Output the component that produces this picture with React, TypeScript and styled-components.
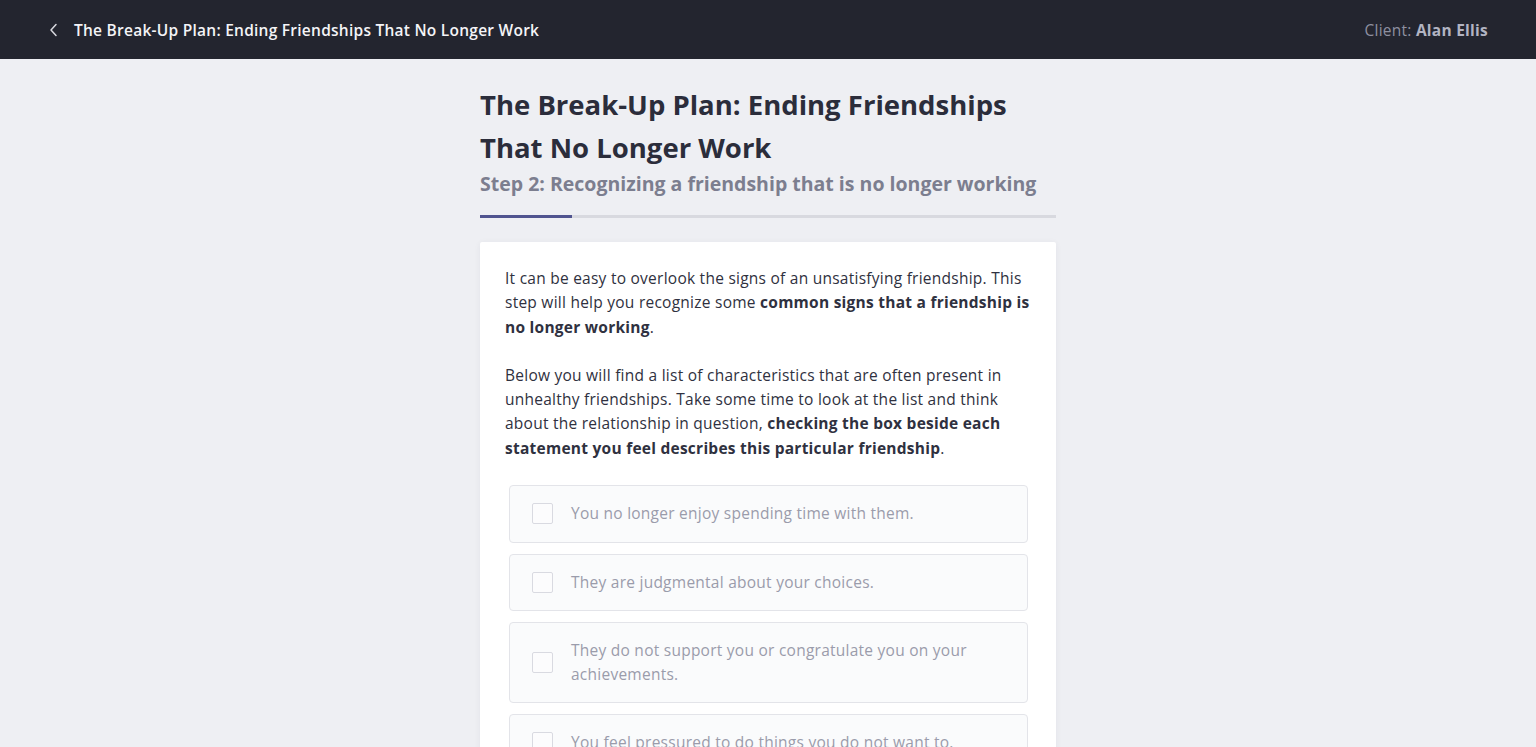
import React from "react";
import styled, { createGlobalStyle } from "styled-components";

const Global = createGlobalStyle`
  html, body { margin: 0; padding: 0; }
  body {
    background: #eeeff3;
    font-family: "Open Sans", "Lato", sans-serif;
    color: #2b2d3b;
    -webkit-font-smoothing: antialiased;
  }
  * { box-sizing: border-box; }
`;

const TopBar = styled.header`
  height: 59px;
  background: #23252f;
  display: flex;
  align-items: center;
  justify-content: space-between;
  padding: 0 48px 0 46px;
`;

const BarLeft = styled.div`
  display: flex;
  align-items: center;
  gap: 14px;
`;

const BackButton = styled.button`
  background: none;
  border: none;
  padding: 0;
  width: 14px;
  height: 20px;
  display: flex;
  align-items: center;
  justify-content: center;
  color: #d8d9df;
  cursor: pointer;
`;

const BarTitle = styled.h1`
  margin: 0;
  font-size: 15.5px;
  letter-spacing: 0.25px;
  font-weight: 600;
  color: #f4f4f7;
`;

const ClientLabel = styled.div`
  font-size: 15.5px;
  letter-spacing: 0.25px;
  color: #8e90a0;
  b { font-weight: 700; color: #b2b4c2; }
`;

const Main = styled.main`
  width: 576px;
  margin: 0 auto;
  padding-top: 24px;
`;

const Title = styled.h2`
  margin: 0;
  font-size: 27.5px;
  line-height: 43px;
  font-weight: 700;
  color: #2b2d3b;
`;

const Subtitle = styled.h3`
  margin: 0;
  font-size: 19.5px;
  line-height: 30px;
  font-weight: 700;
  color: #7c7e8f;
`;

const Progress = styled.div`
  margin-top: 16px;
  height: 3px;
  background: #d8d9df;
  overflow: hidden;
`;

const ProgressFill = styled.div`
  height: 100%;
  background: #50548f;
`;

const Card = styled.section`
  margin-top: 24px;
  background: #ffffff;
  border-radius: 2px;
  box-shadow: 0 1px 6px rgba(30, 32, 60, 0.06);
  padding: 24px 25px 40px;
`;

const Para = styled.p`
  margin: 0 0 24px;
  font-size: 15.5px;
  letter-spacing: 0.25px;
  line-height: 24.3px;
  color: #2f3140;
  b { font-weight: 700; }
`;

const List = styled.div`
  display: flex;
  flex-direction: column;
  gap: 11px;
  padding: 1px 3px 0 4px;
`;

const Item = styled.label`
  display: flex;
  align-items: center;
  gap: 18px;
  min-height: 57.5px;
  padding: 16px 56px 16px 22px;
  background: #fafbfc;
  border: 1px solid #e3e4e9;
  border-radius: 4px;
  cursor: pointer;
`;

const Box = styled.span`
  flex: none;
  width: 21px;
  height: 21px;
  border: 1px solid #d9dae1;
  border-radius: 2px;
  background: #fcfcfd;
`;

const ItemText = styled.span`
  font-size: 15.5px;
  letter-spacing: 0.25px;
  line-height: 23.5px;
  color: #9a9cab;
`;

const items = [
  "You no longer enjoy spending time with them.",
  "They are judgmental about your choices.",
  "They do not support you or congratulate you on your achievements.",
  "You feel pressured to do things you do not want to.",
  "They do not respect your boundaries.",
];

export default function App() {
  const progress = 16;
  return (
    <>
      <Global />
      <TopBar>
        <BarLeft>
          <BackButton aria-label="Back">
            <svg width="9" height="14" viewBox="0 0 9 14" fill="none">
              <path d="M7 1.5L2 7l5 5.5" stroke="currentColor" strokeWidth="1.5" strokeLinecap="round" strokeLinejoin="round" />
            </svg>
          </BackButton>
          <BarTitle>The Break-Up Plan: Ending Friendships That No Longer Work</BarTitle>
        </BarLeft>
        <ClientLabel>
          Client: <b>Alan Ellis</b>
        </ClientLabel>
      </TopBar>
      <Main>
        <Title>The Break-Up Plan: Ending Friendships That No Longer Work</Title>
        <Subtitle>Step 2: Recognizing a friendship that is no longer working</Subtitle>
        <Progress>
          <ProgressFill style={{ width: `${progress}%` }} />
        </Progress>
        <Card>
          <Para>
            It can be easy to overlook the signs of an unsatisfying friendship. This step will help you recognize some{" "}
            <b>common signs that a friendship is no longer working</b>.
          </Para>
          <Para>
            Below you will find a list of characteristics that are often present in unhealthy friendships. Take some time
            to look at the list and think about the relationship in question,{" "}
            <b>checking the box beside each statement you feel describes this particular friendship</b>.
          </Para>
          <List>
            {items.map((t) => (
              <Item key={t}>
                <Box />
                <ItemText>{t}</ItemText>
              </Item>
            ))}
          </List>
        </Card>
      </Main>
    </>
  );
}
